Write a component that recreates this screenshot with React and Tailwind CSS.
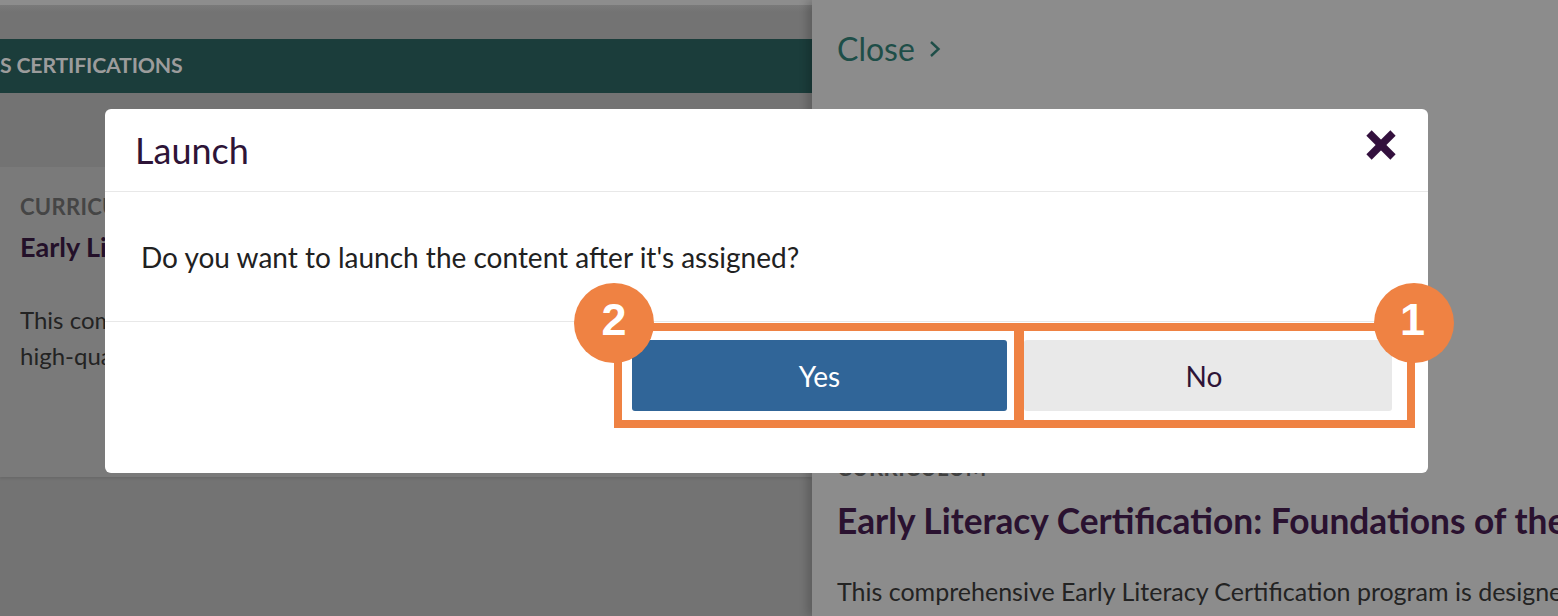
import React from "react";

export default function App() {
  return (
    <div className="relative w-[1558px] h-[616px] overflow-hidden flex font-[Lato,sans-serif]">
      {/* Left background page */}
      <div className="w-[812px] h-full bg-[#737373] flex flex-col shrink-0">
        <div className="h-[5px] bg-[#8d8d8d]" />
        <div className="h-[7px] bg-gradient-to-b from-[#7a7a7a] to-[#737373]" />
        <div className="mt-[27px] h-[54px] bg-[#1b3d3b] flex items-center overflow-hidden">
          <span className="whitespace-nowrap text-[21.3px] font-bold text-[#9c9c9c] tracking-[-0.2px]">
            S CERTIFICATIONS
          </span>
        </div>
        <div className="mt-[74px] h-[310px] bg-[#7a7a7a] shadow-[0_2px_2px_rgba(0,0,0,0.08)] pl-[20px] pt-[27px] overflow-hidden">
          <div className="text-[22px] leading-[26px] font-bold text-[#454545] tracking-[0.3px] whitespace-nowrap">
            CURRICULUM
          </div>
          <div className="mt-[11px] text-[27px] leading-[32px] font-bold text-[#231029] whitespace-nowrap">
            Early Literacy Certification: Foundations of the Science of Reading
          </div>
          <div className="mt-[39px] text-[24px] leading-[36px] text-[#232323] whitespace-nowrap">
            <div>This comprehensive Early Literacy Certification program is designed to equip educators with</div>
            <div>high-quality, research-based strategies for teaching reading.</div>
          </div>
        </div>
      </div>

      {/* Right side panel */}
      <div className="flex-1 h-full bg-[#8c8c8c] pl-[25px] shadow-[-5px_0_8px_rgba(0,0,0,0.18)] overflow-hidden">
        <div className="pt-[30px] flex items-center gap-[14px] text-[32px] leading-[38px] text-[#1e4e48]">
          <span>Close</span>
          <svg width="12" height="18" viewBox="0 0 12 18" fill="none">
            <polyline points="2,2 9.5,9 2,16" stroke="#1e4e48" strokeWidth="2.4" />
          </svg>
        </div>
        <div className="mt-[387px] text-[22px] leading-[26px] font-bold text-[#404040] tracking-[0.5px] whitespace-nowrap">
          CURRICULUM
        </div>
        <div className="mt-[18px] text-[35.3px] leading-[44px] font-bold text-[#2a1230] whitespace-nowrap">
          Early Literacy Certification: Foundations of the Science of Reading
        </div>
        <div className="mt-[30px] text-[25px] leading-[36px] text-[#232323] whitespace-nowrap">
          This comprehensive Early Literacy Certification program is designed to equip educators
        </div>
      </div>

      {/* Modal */}
      <div className="absolute left-[105px] top-[109px] w-[1323px] h-[364px] bg-white rounded-[6px] flex flex-col">
        <div className="h-[83px] shrink-0 border-b border-[#e8e8e8] flex items-center justify-between pl-[30px] pr-[31px]">
          <span className="text-[36px] text-[#2e1437]">Launch</span>
          <svg width="32" height="32" viewBox="0 0 32 32" className="mt-[-11px]">
            <line x1="4" y1="4" x2="28" y2="28" stroke="#33103d" strokeWidth="7.5" />
            <line x1="28" y1="4" x2="4" y2="28" stroke="#33103d" strokeWidth="7.5" />
          </svg>
        </div>
        <div className="h-[130px] shrink-0 border-b border-[#e8e8e8] flex items-center px-[36px]">
          <span className="text-[28px] text-[#212121]">Do you want to launch the content after it's assigned?</span>
        </div>
        <div className="pt-[18px] pr-[36px] flex justify-end gap-[17px]">
          <button className="w-[375px] h-[71px] rounded-[3px] bg-[#306598] text-white text-[28px]">Yes</button>
          <button className="w-[368px] h-[71px] rounded-[3px] bg-[#e9e9e9] text-[#2e1437] text-[28px] pr-[8px]">No</button>
        </div>
      </div>

      {/* Annotation boxes */}
      <div className="absolute left-[614px] top-[323px] w-[408px] h-[105px] border-[8px] border-[#ef8243]" />
      <div className="absolute left-[1016px] top-[323px] w-[399px] h-[105px] border-[8px] border-[#ef8243]" />

      {/* Badges */}
      <div className="absolute left-[574px] top-[283px] w-[80px] h-[80px] rounded-full bg-[#ef8243] flex items-center justify-center pb-[7px]">
        <span className="font-['Liberation_Sans',Arial,sans-serif] font-bold text-[45px] leading-none text-white">2</span>
      </div>
      <div className="absolute left-[1374px] top-[283px] w-[80px] h-[80px] rounded-full bg-[#ef8243] flex items-center justify-center pb-[7px] pr-[3px]">
        <span className="font-['Liberation_Sans',Arial,sans-serif] font-bold text-[45px] leading-none text-white">1</span>
      </div>
    </div>
  );
}
